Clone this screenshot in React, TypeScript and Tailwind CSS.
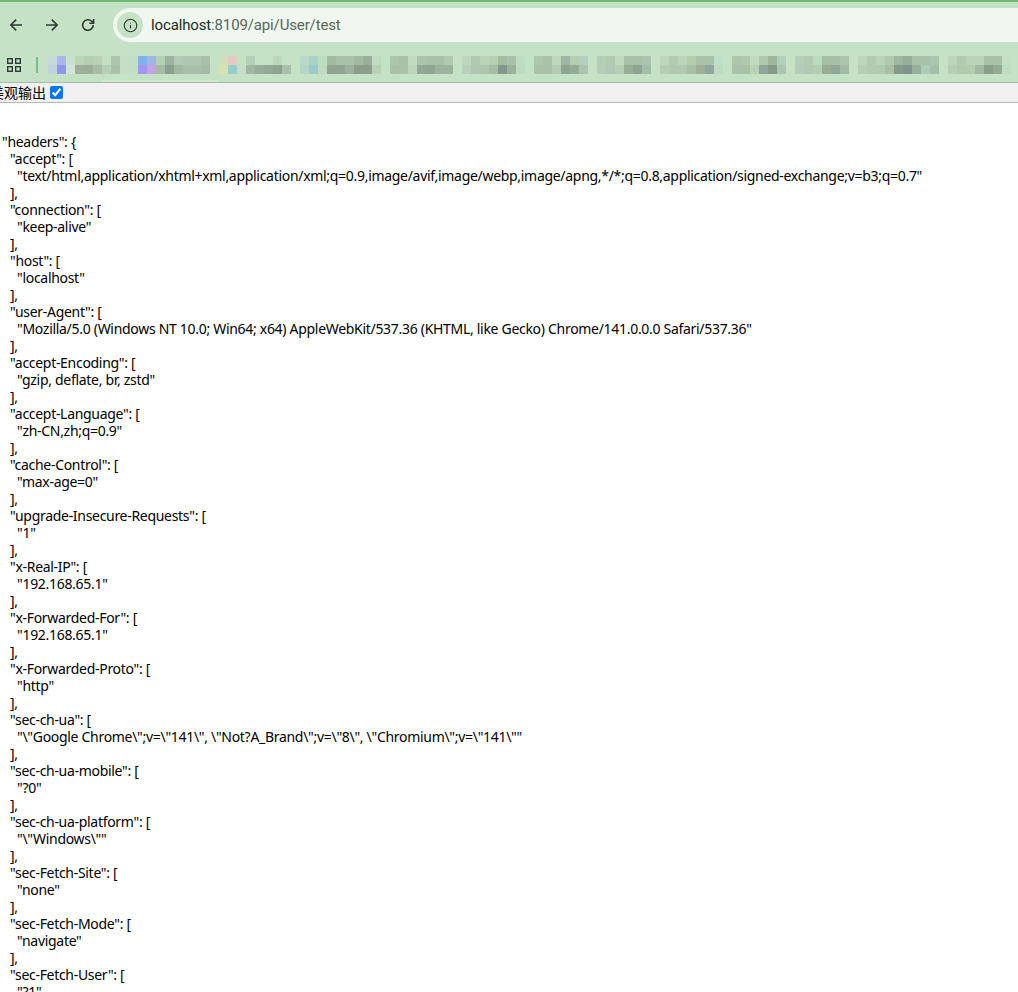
import React from 'react';
import { Info } from 'lucide-react';

const B = '';

// blurred bookmark bar: two rows of 9px blocks, [top, bottom] per column
const BLOCKS: [string, string][] = [
  ['#c8d9dc', '#c0d3dc'], ['#a9b6e8', '#8f97ea'], ['#c8e2cb', '#d0e6d2'], ['#bcd5b8', '#9fb09a'], ['#b6cdb3', '#9cae9a'],
  ['#b9cfb6', '#a8bba5'], ['#c4dfc2', '#b4cdb5'], ['#aec5ad', '#aac2aa'], ['#c4dfc6', '#c4dfc6'], ['#c2dec4', '#c2dec4'],
  ['#7fb3ee', '#a097f0'], ['#a1b5e2', '#c2a4e6'], ['#b5cfb6', '#a5bba4'], ['#9eb4a0', '#8ba08f'], ['#b2c9b5', '#a2b8a3'],
  ['#afc7b0', '#a8bfa8'], ['#afc7b0', '#a8bfa8'], ['#a9c0a9', '#a6bca6'], [B, B], ['#d1dfb9', '#d6e3b0'],
  ['#e8c8c0', '#93cfcf'], ['#c5e1c5', '#c4dfc6'], ['#b5d0b9', '#a0b8a2'], [B, '#98ad9a'], [B, '#93a996'],
  ['#bdd6bd', '#8ea48f'], [B, '#a9c0a9'], [B, B], ['#b8d8c8', '#b5d6c6'], ['#a8d2c8', '#9bcaca'],
  ['#bddcc0', '#c0dabc'], ['#a2b9a2', '#8fa58f'], ['#a9c0a9', '#91a692'], ['#a9c0a9', '#9bb19b'], ['#a2b9a2', '#8b9f8b'],
  ['#9bb09b', '#8b9f8b'], ['#c0dac4', '#b8d2b8'], [B, B], ['#aec5ae', '#a9c0a9'], ['#a9c1a9', '#aac1aa'],
  ['#c0dbc0', '#bcd6bc'], ['#acc4ac', '#93a995'], ['#a9c1a9', '#90a692'], ['#a9c1a9', '#9cb29c'], ['#b0c9b1', '#9cb39e'],
  [B, B], ['#bcd6bf', '#b8d1ba'], ['#b0c9b3', '#b0c8b0'], ['#bad4ba', '#adc4ad'], ['#b5cfb3', '#a5bca5'],
  ['#a3baa3', '#83988c'], ['#a9c0a9', '#9cb29c'], ['#c0ddc4', '#bedac0'], [B, B], ['#aec5ae', '#a9c0a9'],
  ['#a9c3ab', '#a9c0a9'], ['#bcd8bc', '#b4ccb4'], ['#9fb7a2', '#8ea590'], ['#b3ceb0', '#94ab94'], ['#b2d0bc', '#aac4b0'],
  [B, B], ['#b4cfb8', '#b4cdb8'], ['#b0cbb0', '#b0c9b2'], ['#bedac0', '#b5cfb5'], ['#a9c1a9', '#97ae97'],
  ['#a9c1a9', '#8ea390'], ['#a9c3ae', '#a3bcaa'], [B, B], ['#bcd7bc', '#b5cfb6'], ['#b1cbb3', '#b0c9b0'],
  ['#bad6ba', '#b0c9b0'], ['#b3cdaf', '#a7bfa5'], ['#a9c3ab', '#9cb09a'], ['#a9c3ab', '#8fa79c'], ['#c1dfc8', '#bedac0'],
  [B, B], ['#aec5ae', '#aac1aa'], ['#b0cab0', '#a9c1a9'], ['#c0dcc0', '#b8d2b6'], ['#aec9ae', '#8fa79a'],
  ['#9fb59c', '#869c87'], ['#b2d0b7', '#abc6b0'], [B, B], ['#b4cfb8', '#b4cdb6'], ['#b0cbb2', '#b0c9b2'],
  ['#bedabe', '#b3ceb2'], ['#a6bfa6', '#97ad94'], ['#a6bfa8', '#8fa698'], ['#abc4ae', '#a3bca8'], [B, B],
  ['#bcd6bc', '#b5cfb5'], ['#b0cbb2', '#b2ccb2'], ['#b9d4b9', '#b0cab0'], ['#b0cab0', '#a8bfa5'], ['#a0b8a2', '#849a8c'],
  ['#97ae98', '#7f968e'], ['#a8c1a8', '#99b199'], ['#a8c1a8', '#aecbb4'], ['#a9c6ae', '#a6bfa8'], [B, B],
  ['#bcd6bc', '#b5d0b5'], ['#b0cbb2', '#b0cab0'], ['#b9d4b9', '#b2ccb0'], ['#b9d4b9', '#a3baa3'], ['#a8c2a8', '#8a9f8a'],
  ['#a8c2a8', '#94ab94'], ['#c3dfc4', '#bfdbc2'],
];

const HEADERS: [string, string][] = [
  ['accept', 'text/html,application/xhtml+xml,application/xml;q=0.9,image/avif,image/webp,image/apng,*/*;q=0.8,application/signed-exchange;v=b3;q=0.7'],
  ['connection', 'keep-alive'],
  ['host', 'localhost'],
  ['user-Agent', 'Mozilla/5.0 (Windows NT 10.0; Win64; x64) AppleWebKit/537.36 (KHTML, like Gecko) Chrome/141.0.0.0 Safari/537.36'],
  ['accept-Encoding', 'gzip, deflate, br, zstd'],
  ['accept-Language', 'zh-CN,zh;q=0.9'],
  ['cache-Control', 'max-age=0'],
  ['upgrade-Insecure-Requests', '1'],
  ['x-Real-IP', '192.168.65.1'],
  ['x-Forwarded-For', '192.168.65.1'],
  ['x-Forwarded-Proto', 'http'],
  ['sec-ch-ua', '\\"Google Chrome\\";v=\\"141\\", \\"Not?A_Brand\\";v=\\"8\\", \\"Chromium\\";v=\\"141\\"'],
  ['sec-ch-ua-mobile', '?0'],
  ['sec-ch-ua-platform', '\\"Windows\\"'],
  ['sec-Fetch-Site', 'none'],
  ['sec-Fetch-Mode', 'navigate'],
  ['sec-Fetch-User', '?1'],
];

function NavArrow({ flip }: { flip?: boolean }) {
  return (
    <svg width="14" height="14" viewBox="0 0 14 14" fill="none" stroke="#2f3a31" strokeWidth="1.6" className={flip ? 'rotate-180' : ''}>
      <path d="M13 7H2M7.2 1.6 1.8 7l5.4 5.4" />
    </svg>
  );
}

function Toolbar() {
  return (
    <div className="flex h-[45px] items-center bg-[#c6e2c6] pt-[1px]">
      <div className="ml-[9px] flex w-[14px] justify-center"><NavArrow /></div>
      <div className="ml-[22px] flex w-[14px] justify-center"><NavArrow flip /></div>
      <div className="ml-[22px] flex w-[14px] justify-center">
        <svg width="14" height="14" viewBox="0 0 14 14" fill="none" stroke="#2f3a31" strokeWidth="1.6">
          <path d="M12.2 7a5.3 5.3 0 1 1-1.5-3.7L12.4 5" />
          <path d="M12.6 1v4.3H8.3" />
        </svg>
      </div>
      <div className="ml-[18px] flex h-[34px] flex-1 items-center rounded-l-full bg-[#f0f7f0] pl-[4px]">
        <div className="flex h-[26px] w-[26px] items-center justify-center rounded-full bg-[#c6e2c6]">
          <Info size={15} color="#2f3a31" strokeWidth={1.8} />
        </div>
        <div className="ml-[8px] text-[15px] tracking-[-0.14px] text-[#1f2a21] [font-family:'Roboto',sans-serif]">
          localhost<span className="text-[#59655b]">:8109/api/User/test</span>
        </div>
      </div>
    </div>
  );
}

function BookmarkBar() {
  return (
    <div className="relative flex h-[36px] items-center border-b border-[#a5bda7] bg-[#c6e2c6]">
      <svg width="14" height="14" viewBox="0 0 14 14" fill="none" stroke="#2f3a31" strokeWidth="1.4" className="ml-[7px]">
        <rect x="0.7" y="0.7" width="4.6" height="4.6" />
        <rect x="8.7" y="0.7" width="4.6" height="4.6" />
        <rect x="0.7" y="8.7" width="4.6" height="4.6" />
        <rect x="8.7" y="8.7" width="4.6" height="4.6" />
      </svg>
      <div className="ml-[15px] h-[16px] w-[2px] bg-[#7fba88]" />
      <div className="ml-[10px] flex">
        {BLOCKS.map(([top, bottom], i) => (
          <div key={i} className="w-[9px]">
            <div className="h-[9px]" style={{ backgroundColor: top || undefined }} />
            <div className="h-[9px]" style={{ backgroundColor: bottom || undefined }} />
          </div>
        ))}
      </div>
      <div className="absolute bottom-0 left-[102px] h-[2px] w-[116px] rounded-t bg-[#d2e6d2]" />
    </div>
  );
}

function Line({ children, level }: { children: React.ReactNode; level: 0 | 1 | 2 }) {
  const indent = level === 0 ? 'pl-[2px]' : level === 1 ? 'pl-[10px]' : 'pl-[17px]';
  return <div className={`h-[17px] whitespace-nowrap ${indent}`}>{children}</div>;
}

export default function App() {
  return (
    <div className="h-[992px] w-[1018px] overflow-hidden bg-white text-black">
      <div className="h-[2px] bg-[#72b77a]" />
      <Toolbar />
      <BookmarkBar />
      <div className="flex h-[20px] items-center overflow-hidden border-b border-[#b8b8b8] bg-[#f0f0f0] text-[14px] [font-family:'Noto_Sans_CJK_SC',sans-serif]">
        <span className="-ml-[10px] whitespace-nowrap">美观输出</span>
        <input type="checkbox" defaultChecked className="ml-[4px]" />
      </div>
      <div className="pt-[30px] text-[14px] leading-[17px] tracking-[-0.3px] [font-family:'Noto_Sans',sans-serif]">
        <Line level={0}>"headers": {'{'}</Line>
        {HEADERS.map(([key, value]) => (
          <React.Fragment key={key}>
            <Line level={1}>"{key}": [</Line>
            <Line level={2}>"{value}"</Line>
            <Line level={1}>],</Line>
          </React.Fragment>
        ))}
      </div>
    </div>
  );
}
